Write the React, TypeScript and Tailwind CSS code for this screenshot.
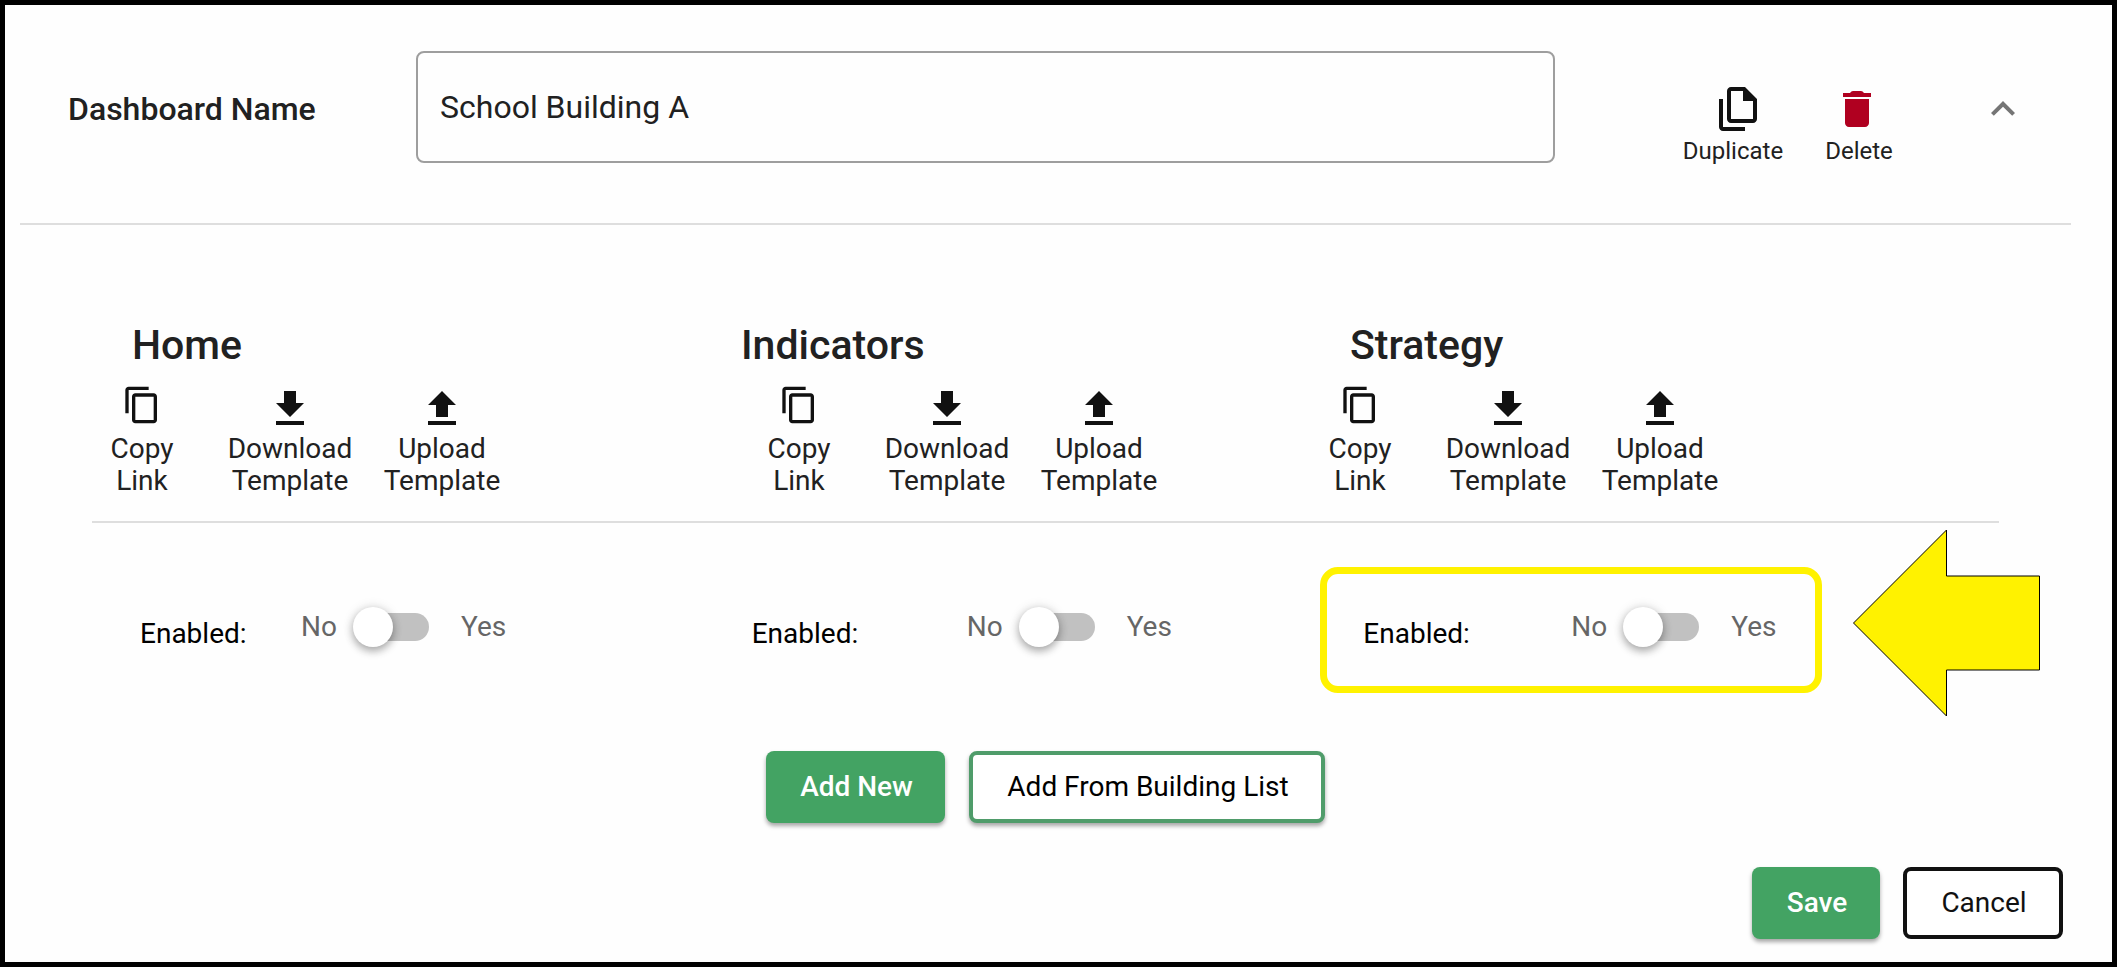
import { useState } from 'react';
import clsx from 'clsx';

const ICONS = {
  duplicate:
    'M15 23H4c-1.1 0-2-.9-2-2V7h2v14h11v2zM15 1H8c-1.1 0-2 .9-2 2v14c0 1.1.9 2 2 2h11c1.1 0 2-.9 2-2V7l-6-6zM8 17V3h6v5h5v9H8z',
  remove:
    'M6 19c0 1.1.9 2 2 2h8c1.1 0 2-.9 2-2V7H6v12zM19 4h-3.5l-.7-.7c-.2-.2-.5-.3-.8-.3h-4c-.3 0-.6.1-.8.3l-.7.7H5v2h14V4z',
  collapse: 'M12 8l-6 6 1.41 1.41L12 10.83l4.59 4.58L18 14z',
  copy:
    'M16 1H4c-1.1 0-2 .9-2 2v14h2V3h12V1zm3 4H8c-1.1 0-2 .9-2 2v14c0 1.1.9 2 2 2h11c1.1 0 2-.9 2-2V7c0-1.1-.9-2-2-2zm0 16H8V7h11v14z',
  download: 'M19 9h-4V3H9v6H5l7 7 7-7zM5 18v2h14v-2H5z',
  upload: 'M9 16h6v-6h4l-7-7-7 7h4v6zm-4 2h14v2H5v-2z',
};

type IconName = keyof typeof ICONS;

const SECTIONS = [
  { id: 'home', title: 'Home', labelWidth: 'w-[161px]' },
  { id: 'indicators', title: 'Indicators', labelWidth: 'w-[215px]' },
  { id: 'strategy', title: 'Strategy', labelWidth: 'w-[208px]' },
];

const BUTTON_CLASS =
  'flex h-[72px] items-center justify-center rounded-lg text-[28px] leading-8';
const RAISED_CLASS = 'shadow-[0_3px_4px_rgba(0,0,0,0.35)]';

function Icon({ name, className }: { name: IconName; className?: string }) {
  return (
    <svg
      viewBox="0 0 24 24"
      fill="currentColor"
      aria-hidden="true"
      className={className}
    >
      <path d={ICONS[name]} />
    </svg>
  );
}

function ToolButton({
  icon,
  lines,
  className,
}: {
  icon: IconName;
  lines: [string, string];
  className: string;
}) {
  return (
    <button
      type="button"
      className={clsx(
        'flex shrink-0 flex-col items-center text-[28px] leading-8 text-[#212121]',
        className
      )}
    >
      <span className="flex h-12 items-start">
        <Icon
          name={icon}
          className={clsx('text-[#111]', icon === 'copy' ? 'size-10' : 'size-12')}
        />
      </span>
      <span>{lines[0]}</span>
      <span>{lines[1]}</span>
    </button>
  );
}

function EnabledSwitch({
  id,
  checked,
  onChange,
}: {
  id: string;
  checked: boolean;
  onChange: (next: boolean) => void;
}) {
  return (
    <div className="flex h-10 items-center text-[28px] leading-8 text-[#666]">
      <span className="w-[52px]">No</span>
      <label className="relative flex h-10 w-[76px] items-center">
        <input
          id={id}
          type="checkbox"
          role="switch"
          className="peer sr-only"
          checked={checked}
          onChange={(e) => onChange(e.target.checked)}
        />
        <span className="ml-1 h-7 w-[72px] rounded-full bg-[#c1c1c1] peer-checked:bg-[#43a363]" />
        <span className="absolute left-0 size-10 rounded-full bg-white shadow-[0_4px_8px_rgba(0,0,0,0.3),0_0_12px_rgba(0,0,0,0.12)] peer-checked:left-9" />
      </label>
      <span className="ml-8">Yes</span>
    </div>
  );
}

// Callout frame and arrow drawn over the section they point at
function Callout() {
  return (
    <>
      <div className="pointer-events-none absolute -top-10 -left-[43px] h-[126px] w-[502px] rounded-[18px] border-[7px] border-[#fff200]" />
      <svg
        viewBox="0 0 188 188"
        aria-hidden="true"
        className="pointer-events-none absolute -top-[78px] left-[490px] size-[188px]"
      >
        <path
          d="M.5 94L93.5 1v46h93v94h-93v46z"
          fill="#fff200"
          stroke="#000"
          strokeWidth="1"
        />
      </svg>
    </>
  );
}

export default function App() {
  const [name, setName] = useState('School Building A');
  const [enabled, setEnabled] = useState<Record<string, boolean>>({});

  return (
    <main className="flex min-h-screen flex-col border-[5px] border-black bg-[#fefefe] font-[Roboto,sans-serif] text-[#212121]">
      <header className="mr-[41px] ml-[15px] flex border-b-2 border-[#dedede] pt-[46px] pr-11 pb-[58px] pl-12">
        <label
          htmlFor="dashboard-name"
          className="w-[348px] shrink-0 self-center pt-0.5 text-[32px] leading-10 font-medium"
        >
          Dashboard Name
        </label>
        <input
          id="dashboard-name"
          type="text"
          className="h-28 min-w-0 flex-1 rounded-lg border-2 border-[#9e9e9e] px-[22px] text-[32px]"
          value={name}
          onChange={(e) => setName(e.target.value)}
        />
        <div className="ml-[127px] flex shrink-0 items-start pt-[34px] text-2xl leading-7">
          <button type="button" className="flex w-[102px] flex-col items-center">
            <Icon name="duplicate" className="ml-3 size-12 text-[#111]" />
            <span className="mt-1">Duplicate</span>
          </button>
          <button
            type="button"
            className="ml-10 flex w-[70px] flex-col items-center"
          >
            <Icon name="remove" className="mr-1 size-12 text-[#b00020]" />
            <span className="mt-1">Delete</span>
          </button>
          <button type="button" aria-label="Collapse" className="ml-[85px]">
            <Icon name="collapse" className="size-12 text-[#757575]" />
          </button>
        </div>
      </header>

      <div className="mr-[113px] ml-[87px] pt-24">
        <div className="grid grid-cols-3 px-10">
          {SECTIONS.map((s) => (
            <h2 key={s.id} className="text-[41px] leading-[48px] font-medium">
              {s.title}
            </h2>
          ))}
        </div>

        <div className="mt-4 grid grid-cols-[657fr_561fr_689fr] border-b-2 border-[#dedede] pb-6">
          {SECTIONS.map((s) => (
            <div key={s.id} className="flex pl-[18px]">
              <ToolButton icon="copy" lines={['Copy', 'Link']} className="w-16" />
              <ToolButton
                icon="download"
                lines={['Download', 'Template']}
                className="ml-[52px] w-32"
              />
              <ToolButton
                icon="upload"
                lines={['Upload', 'Template']}
                className="ml-6 w-32"
              />
            </div>
          ))}
        </div>

        <div className="mt-[84px] grid grid-cols-3 pr-6 pl-12">
          {SECTIONS.map((s) => (
            <div key={s.id} className="relative flex items-start">
              <label
                htmlFor={`enabled-${s.id}`}
                className={clsx(
                  'shrink-0 pt-[11px] text-[28px] leading-8 text-black',
                  s.labelWidth
                )}
              >
                Enabled:
              </label>
              <EnabledSwitch
                id={`enabled-${s.id}`}
                checked={enabled[s.id] ?? false}
                onChange={(next) => setEnabled({ ...enabled, [s.id]: next })}
              />
              {s.id === 'strategy' && <Callout />}
            </div>
          ))}
        </div>

        <div className="mt-[101px] flex justify-center gap-6">
          <button
            type="button"
            className={clsx(
              BUTTON_CLASS,
              RAISED_CLASS,
              'w-[179px] bg-[#43a363] pl-0.5 font-medium text-white'
            )}
          >
            Add New
          </button>
          <button
            type="button"
            className={clsx(
              BUTTON_CLASS,
              RAISED_CLASS,
              'w-[356px] border-4 border-[#4f9c6a] bg-white pl-0.5 text-black'
            )}
          >
            Add From Building List
          </button>
        </div>
      </div>

      <footer className="mt-11 mr-[49px] mb-[23px] flex justify-end gap-[23px]">
        <button
          type="button"
          className={clsx(
            BUTTON_CLASS,
            RAISED_CLASS,
            'w-32 bg-[#43a363] pl-0.5 font-medium text-white'
          )}
        >
          Save
        </button>
        <button
          type="button"
          className={clsx(
            BUTTON_CLASS,
            'w-40 border-4 border-[#111] bg-white pl-0.5 text-[#111]'
          )}
        >
          Cancel
        </button>
      </footer>
    </main>
  );
}
